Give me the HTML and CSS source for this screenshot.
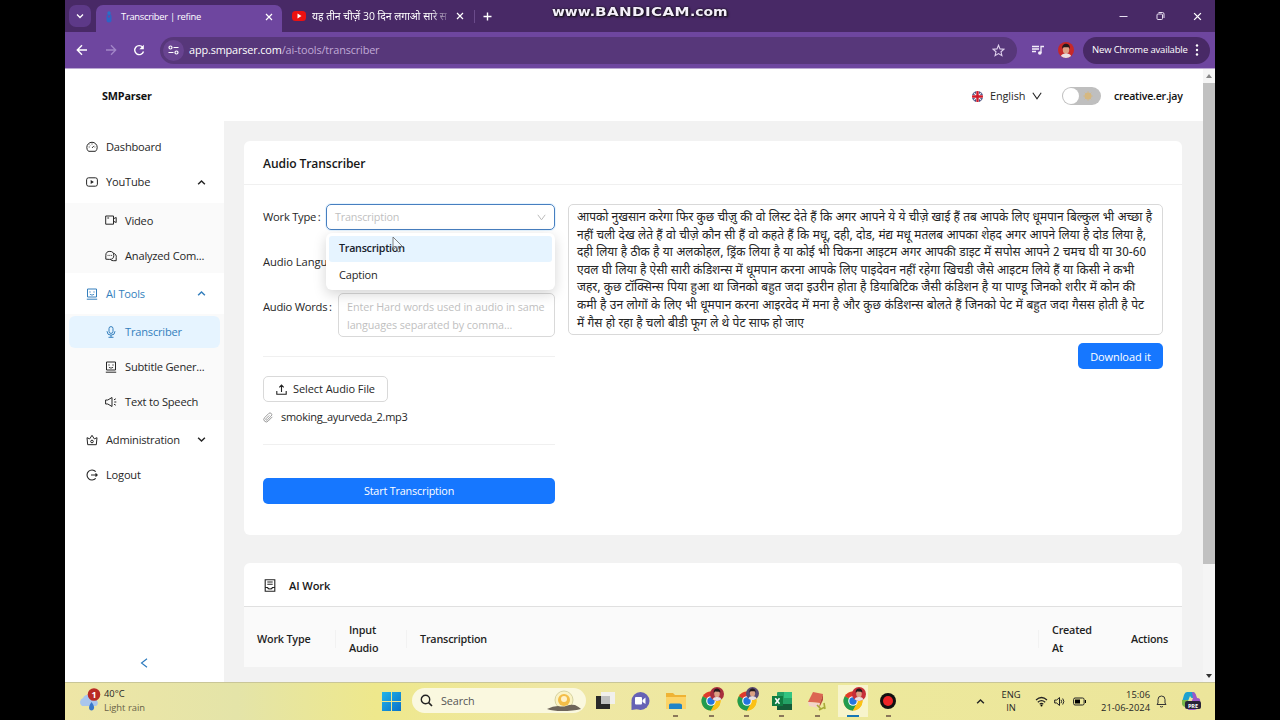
FILE: index.html
```html
<!DOCTYPE html>
<html lang="en">
<head>
<meta charset="utf-8">
<title>Transcriber | refine</title>
<link rel="stylesheet" href="styles.css">
</head>
<body>
<svg width="0" height="0" class="defs">
  <defs>
    <linearGradient id="win" x2="1" y2="1"><stop stop-color="#23b5ea"/><stop offset="1" stop-color="#0870c8"/></linearGradient>
    <symbol id="up" viewBox="0 0 8 8"><path d="M1 5.6 4 2.6 7 5.6" fill="none" stroke="currentColor" stroke-width="1.3"/></symbol>
    <symbol id="x" viewBox="0 0 8 8"><path d="M1 1 7 7M7 1 1 7" fill="none" stroke="currentColor" stroke-width="1.2"/></symbol>
    <symbol id="robot" viewBox="0 0 12 12"><g fill="none" stroke="currentColor"><path d="M1.5 1h9v8h-9zM.8 11.2h10.4"/><path d="M4 3.3v1.4M8 3.3v1.4M3.9 6.3q2.1 1.7 4.2 0" stroke-width=".9"/></g></symbol>
    <symbol id="chrome" viewBox="0 0 22 22">
      <circle cx="10" cy="12" r="9.5" fill="#fbc116"/>
      <path d="M10 12 1.8 7.2A9.5 9.5 0 0 1 18.2 7.2Z" fill="#df3a2d"/>
      <path d="M10 12 1.8 7.2A9.5 9.5 0 0 0 10 21.5Z" fill="#219b50"/>
      <path d="M10 12 14 14 10 21.5 5 19Z" fill="#219b50"/>
      <path d="M10 7.2h8.2a9.500 9.500 0 0 1-8.200 14.300l4.200-7z" fill="#fbc116"/>
      <circle cx="10" cy="12" r="4.8" fill="#fff"/><circle cx="10" cy="12" r="3.7" fill="#2475df"/>
    </symbol>
    <symbol id="face" viewBox="0 0 14 14">
      <circle cx="7" cy="7" r="7" fill="currentColor"/><ellipse cx="7" cy="6.800" rx="2.800" ry="3.600" fill="#dca184"/>
      <path d="M3.700 6C3.300 2.500 5.500 1.300 7.500 1.600s3.300 1.900 2.700 4.500L9.400 4.700 5 4.600z" fill="#251a1c"/>
      <path d="M2.500 12.300Q3.500 9.800 7 10q3.500-.2 4.500 2.300A7 7 0 0 1 2.500 12.300z" fill="#e8dfe3"/>
    </symbol>
  </defs>
</svg>
<div class="screen">
  <div class="tabs">
    <div class="tab-search"><svg width="8" height="8" viewBox="0 0 8 8"><path d="M1 2.500 4 5.500 7 2.500" fill="none" stroke="#fff" stroke-width="1.300"/></svg></div>
    <div class="tab active">
      <svg class="fav" width="8" height="12" viewBox="0 0 8 12"><rect x="1.500" y="3" width="5" height="8.500" rx="2.500" fill="#2c65c5"/><circle cx="4" cy="2" r="1.700" fill="#2872c8"/><circle cx="4" cy="5.500" r="1.200" fill="#6d46a1"/></svg>
      <span class="tab-title">Transcriber | refine</span><svg class="tab-x" width="8" height="8"><use href="#x"/></svg>
    </div>
    <div class="tab second">
      <svg width="14" height="12" viewBox="0 0 14 12"><rect y="1" width="14" height="10" rx="3.500" fill="#ed1111"/><path d="M5.500 3.500v5L9.500 6z" fill="#fff"/></svg>
      <span class="tab-title hindi-title">यह तीन चीज़ें 30 दिन लगाओ सारे स</span><svg class="tab-x" width="8" height="8"><use href="#x"/></svg>
    </div>
    <span class="tab-sep"></span>
    <svg class="plus" width="9" height="9" viewBox="0 0 9 9"><path d="M4.500.5v8M.5 4.500h8" stroke="#fff" stroke-width="1.400"/></svg>
    <div class="watermark"><span class="wm-s">www.</span><b>BANDICAM</b><span class="wm-s">.com</span></div>
    <div class="win-controls">
      <svg width="9" height="10" viewBox="0 0 9 10"><path d="M.5 5.500h8" stroke="#e8dff2"/></svg>
      <svg width="9" height="10" viewBox="0 0 9 10"><path d="M2.500 1.500h4q1.500 0 1.500 1.500v4M2 3h3.500Q6.500 3 6.500 4v3.500Q6.500 8.500 5.500 8.500H2Q1 8.500 1 7.500V4Q1 3 2 3z" fill="none" stroke="#e8dff2"/></svg>
      <svg width="9" height="9"><use href="#x"/></svg>
    </div>
  </div>
  <div class="toolbar">
    <svg width="12" height="12" viewBox="0 0 12 12"><path d="M11 6H1.500M6 1.300 1.300 6 6 10.700" fill="none" stroke="#fff" stroke-width="1.400"/></svg>
    <svg width="12" height="12" viewBox="0 0 12 12"><path d="M1 6h9.500M6 1.300 10.700 6 6 10.700" fill="none" stroke="#a286c8" stroke-width="1.300"/></svg>
    <svg width="12" height="12" viewBox="0 0 12 12"><path d="M9.700 3.300A4.500 4.500 0 1 0 10.500 7.500" fill="none" stroke="#fff" stroke-width="1.400"/><path d="M10.800.800v4.400H6.400z" fill="#fff"/></svg>
    <div class="address">
      <span class="site-info"><svg width="11" height="10" viewBox="0 0 11 10"><g fill="none" stroke="#fff" stroke-width="1.200"><circle cx="2.500" cy="2.500" r="1.500"/><path d="M5.500 2.500h5M.5 7.500h5"/><circle cx="8.500" cy="7.500" r="1.500"/></g></svg></span>
      <span class="url">app.smparser.com<i>/ai-tools/transcriber</i></span>
      <svg class="star" width="13" height="13" viewBox="0 0 13 13"><path d="M6.500 1.200 8 4.900l4 .3-3 2.600.9 3.900-3.400-2.100-3.400 2.100.9-3.900L1 5.200l4-.3z" fill="none" stroke="#e0d2ee" stroke-width="1.100"/></svg>
    </div>
    <svg class="media" width="13" height="12" viewBox="0 0 13 12"><path d="M1 2.500h7M1 5h7M1 7.500h4M10 9V2.500h3" fill="none" stroke="#f4eefa" stroke-width="1.300"/><circle cx="8.800" cy="9" r="1.800" fill="#f4eefa"/></svg>
    <svg class="profile" width="16" height="16"><use href="#face"/></svg>
    <div class="update"><span>New Chrome available</span><svg width="4" height="12" viewBox="0 0 4 12"><g fill="#fff"><circle cx="2" cy="1.500" r="1.200"/><circle cx="2" cy="6" r="1.200"/><circle cx="2" cy="10.500" r="1.200"/></g></svg></div>
  </div>
  <div class="viewport">
    <div class="app">
      <header class="header">
        <b class="brand">SMParser</b>
        <svg class="flag" width="11" height="11" viewBox="0 0 11 11"><clipPath id="fc"><circle cx="5.500" cy="5.500" r="5.500"/></clipPath><g clip-path="url(#fc)"><path fill="#28316d" d="M0 0h11v11H0z"/><path d="M0 0l11 11M11 0 0 11" stroke="#eee" stroke-width="1.200"/><path d="M5.500 0v11M0 5.500h11" stroke="#fff" stroke-width="3.300"/><path d="M5.500 0v11M0 5.500h11" stroke="#d01c2c" stroke-width="2.400"/></g></svg>
        <span class="lang">English</span>
        <svg class="lang-arrow" width="10" height="8" viewBox="0 0 10 8"><path d="M.8.800 5 6.800 9.200.8" fill="none" stroke="#222" stroke-width="1.100"/></svg>
        <span class="switch"><span class="knob"></span><svg width="10" height="10" viewBox="0 0 10 10"><circle cx="5" cy="5" r="3.500" fill="#d6b880"/><path d="M5 0v10M0 5h10M1.500 1.500l7 7M8.500 1.500l-7 7" stroke="#d6b880" opacity=".6"/></svg></span>
        <span class="user">creative.er.jay</span>
      </header>
      <div class="content">
        <nav class="sider">
          <div class="item"><svg width="12" height="12" viewBox="0 0 12 12"><g fill="none" stroke="currentColor"><path d="M2.500 10.300a5.200 5.200 0 1 1 7 0z"/><path d="M6 7 8 4.800M2.700 6h1M6 2.500v1M9.300 6h-.8M3.500 3.700l.6.6" stroke-width=".9"/></g></svg><span>Dashboard</span></div>
          <div class="item"><svg width="12" height="12" viewBox="0 0 12 12"><rect x=".6" y="1.800" width="10.800" height="8.400" rx="2" fill="none" stroke="currentColor"/><path d="M4.700 4v4L7.900 6z" fill="currentColor"/></svg><span>YouTube</span><svg class="arrow" width="9" height="9"><use href="#up"/></svg></div>
          <div class="sub">
            <div class="item"><svg width="12" height="12" viewBox="0 0 12 12"><path d="M.7 2h7.800v8.200H.7zM2.300 4h1.800M8.500 4.700l2.700-1.200v5L8.500 7.300" fill="none" stroke="currentColor"/></svg><span>Video</span></div>
            <div class="item"><svg width="12" height="12" viewBox="0 0 12 12"><path d="M.8 9.200V5.400a4 4 0 1 1 3.900 4zM8.300 3.200a3.600 3.600 0 0 1 2.900 4.500v3H8.300a3.500 3.500 0 0 1-3-1.300" fill="none" stroke="currentColor"/><path d="M2.600 5.400h.9M4.400 5.400h.9M6.200 5.400h.9" stroke="currentColor"/></svg><span>Analyzed Com...</span></div>
          </div>
          <div class="item blue"><svg width="12" height="12"><use href="#robot"/></svg><span>AI Tools</span><svg class="arrow" width="9" height="9"><use href="#up"/></svg></div>
          <div class="sub tools">
            <div class="item selected"><svg width="12" height="12" viewBox="0 0 12 12"><g fill="none" stroke="currentColor"><rect x="4" y=".6" width="4" height="6.800" rx="2"/><path d="M2 5.200a4 4 0 0 0 8 0M6 9.200v2M3.500 11.300h5"/></g></svg><span>Transcriber</span></div>
            <div class="item"><svg width="12" height="12"><use href="#robot"/></svg><span>Subtitle Gener...</span></div>
            <div class="item"><svg width="12" height="12" viewBox="0 0 12 12"><path d="M.6 4h2.200L7 1.500v9L2.800 8H.6zM9 3.800l1.800-1M9.300 6h2M9 8.200l1.800 1" fill="none" stroke="currentColor"/></svg><span>Text to Speech</span></div>
          </div>
          <div class="item"><svg width="12" height="12" viewBox="0 0 12 12"><g fill="none" stroke="currentColor"><path d="M1.700 10.700 1 3.700l2.700 1.200L6 1.300l2.300 3.600L11 3.700l-.7 7z"/><circle cx="6" cy="7.500" r="1.300"/></g></svg><span>Administration</span><svg class="arrow down" width="9" height="9"><use href="#up"/></svg></div>
          <div class="item"><svg width="12" height="12" viewBox="0 0 12 12"><path d="M9.700 2.600a5 5 0 1 0 0 6.800M5 6h6M9.500 4.500 11.200 6 9.500 7.500" fill="none" stroke="currentColor" stroke-width="1.100"/></svg><span>Logout</span></div>
          <div class="collapse"><svg width="8" height="10" viewBox="0 0 8 10"><path d="M7 .8 1.500 5 7 9.200" fill="none" stroke="#2878bd" stroke-width="1.100"/></svg></div>
        </nav>
        <main class="main">
          <section class="card transcriber">
            <h2 class="card-title">Audio Transcriber</h2>
            <div class="card-body">
              <div class="form">
                <div class="row"><label class="l1">Work Type&thinsp;:</label>
                  <div class="select"><span>Transcription</span><svg width="9" height="7" viewBox="0 0 9 7"><path d="M.8.800 4.500 5.800 8.200.8" fill="none" stroke="#bbb"/></svg>
                    <div class="dropdown"><div class="option chosen">Transcription</div><div class="option">Caption</div></div>
                  </div>
                </div>
                <div class="row row2"><label>Audio Langu</label></div>
                <div class="row row3"><label class="l3">Audio Words&thinsp;:</label><div class="words"><span>Enter Hard words used in audio in same</span><span>languages separated by comma...</span></div></div>
                <hr class="rule">
                <div class="file-button"><svg width="11" height="11" viewBox="0 0 11 11"><path d="M.8 7v3.200h9.400V7M5.500 8V1.200M3.300 3.300l2.200-2.200 2.200 2.200" fill="none" stroke="#222" stroke-width="1.100"/></svg><span>Select Audio File</span></div>
                <div class="file"><svg width="11" height="11" viewBox="0 0 12 12"><path d="M10.200 5.300 5.500 10a2.600 2.600 0 0 1-3.800-3.800L6.300 1.600a1.900 1.900 0 0 1 2.700 2.700L4.700 8.600a.9.900 0 0 1-1.400-1.300l3.600-3.600" fill="none" stroke="#888" stroke-width=".9"/></svg><span>smoking_ayurveda_2.mp3</span></div>
                <hr class="rule">
                <div class="button start"><span>Start Transcription</span></div>
              </div>
              <div class="result">
                <div class="output" lang="hi">
                  <p class="o1">आपको नुखसान करेगा फिर कुछ चीज़ु की वो लिस्ट देते हैं कि अगर आपने ये ये चीज़े खाई हैं तब आपके लिए धूमपान बिल्कुल भी अच्छा है</p>
                  <p class="o2">नहीं चली देख लेते हैं वो चीज़े कौन सी हैं वो कहते हैं कि मधू, दही, दोड, मंद्य मधू मतलब आपका शेहद अगर आपने लिया है दोड लिया है,</p>
                  <p class="o2">दही लिया है ठीक है या अलकोहल, ड्रिंक लिया है या कोई भी चिकना आइटम अगर आपकी डाइट में सपोस आपने 2 चमच घी या 30-60</p>
                  <p class="o4">एवल घी लिया है ऐसी सारी कंडिशन्स में धूमपान करना आपके लिए पाइदेवन नहीं रहेगा खिचडी जैसे आइटम लिये हैं या किसी ने कभी</p>
                  <p class="o5">जहर, कुछ टॉक्सिन्स पिया हुआ था जिनको बहुत जदा इउरीन होता है डियाबिटिक जैसी कंडिशन है या पाण्डू जिनको शरीर में कोन की</p>
                  <p class="o6">कमी है उन लोगों के लिए भी धूमपान करना आइरवेद में मना है और कुछ कंडिशन्स बोलते हैं जिनको पेट में बहुत जदा गैसस होती है पेट</p>
                  <p class="o7">में गैस हो रहा है चलो बीडी फूग ले थे पेट साफ हो जाए</p>
                </div>
                <div class="button download"><span>Download it</span></div>
              </div>
            </div>
          </section>
          <section class="card work">
            <h2 class="card-title work-title"><svg width="12" height="13" viewBox="0 0 12 13"><path d="M1.200.700h9.600v11.600H1.200zM3.300 3h5.400M3.300 5.200h5.400M1.200 8.500h2.300q.4 1.500 2.500 1.500t2.500-1.500h2.300" fill="none" stroke="#222" stroke-width="1.100"/></svg>AI Work</h2>
            <div class="table-head"><span class="c1">Work Type</span><span class="c2">Input<br>Audio</span><span class="c3">Transcription</span><span class="c4">Created<br>At</span><span class="c5">Actions</span></div>
          </section>
        </main>
      </div>
    </div>
    <div class="scrollbar"><i class="sb-up"></i><span class="thumb"></span><i class="sb-down"></i></div>
  </div>
  <div class="taskbar">
    <div class="weather">
      <svg width="22" height="26" viewBox="0 0 22 26"><path d="M3 18a4.500 4.500 0 0 1 1-8 6 6 0 0 1 11 1 3.800 3.800 0 0 1 2 7z" fill="#a9c6ee"/><path d="M12.500 14q4 5 2 7.500-2 1.800-4 0-1.700-2.500 2-7.500z" fill="#3877c9"/><circle cx="15" cy="6.500" r="6.300" fill="#b92b24"/><text x="15" y="9.800" text-anchor="middle" class="badge">1</text></svg>
      <div class="weather-text"><span>40°C</span><span class="dim">Light rain</span></div>
    </div>
    <svg class="winlogo" width="19" height="19" viewBox="0 0 19 19"><path d="M0 0h9v9H0zM10 0h9v9h-9zM0 10h9v9H0zM10 10h9v9h-9z" fill="url(#win)"/></svg>
    <div class="search"><svg width="13" height="13" viewBox="0 0 13 13"><circle cx="5.500" cy="5.500" r="4.200" fill="none" stroke="#222" stroke-width="1.400"/><path d="m8.600 8.600 3.400 3.400" stroke="#222" stroke-width="1.600"/></svg><span>Search</span>
      <svg class="art" width="36" height="22" viewBox="0 0 36 22"><circle cx="18" cy="10" r="9" fill="#faf3c4" stroke="#d6d3a2"/><circle cx="18" cy="10" r="6" fill="#f3bd48"/><circle cx="18" cy="9" r="3" fill="#fff1c7"/><path d="M1 19q6-3 11-3 5 1 8 0 5-2 9-1 4 2 6 4-8 2-19 2-9 0-15-2z" fill="#6e655b"/></svg></div>
    <div class="apps">
      <svg width="20" height="20" viewBox="0 0 20 20"><path d="M1 5h14v13H1z" fill="#292929"/><path d="M6 1h14v12H6z" fill="#f1f0ec"/><path d="M6 5h9v8H6z" fill="#bfc0c0"/></svg>
      <svg width="20" height="20" viewBox="0 0 20 20"><circle cx="10.500" cy="10" r="9" fill="#6762b5"/><path d="M1.500 11v8l7-1z" fill="#6762b5"/><rect x="5" y="6" width="7" height="7.500" rx="1" fill="#fff"/><path d="m12.500 9 3-2.500v6.500l-3-2z" fill="#fff"/></svg>
      <svg class="run" width="20" height="20" viewBox="0 0 20 20"><path d="M0 2h7l2 2h11v14H0z" fill="#efb334"/><path d="M0 6h20v12H0z" fill="#fcd467"/><path d="M3 18v-4q0-1.500 1.500-1.500h9Q16 12.500 16 14v4z" fill="#2185c7"/></svg>
      <span class="chr run"><svg width="22" height="22"><use href="#chrome"/></svg><svg class="av a1" width="14" height="14"><use href="#face"/></svg></span>
      <span class="chr run"><svg width="22" height="22"><use href="#chrome"/></svg><svg class="av a2" width="13" height="13"><use href="#face"/></svg></span>
      <svg class="run" width="20" height="20" viewBox="0 0 20 20"><rect x="5" y="1" width="15" height="18" rx="1" fill="#24a266"/><path d="M12 1h8v6h-8z" fill="#33c481"/><path d="M5 13h15v6H5z" fill="#155c39"/><path d="M0 5h11v10H0z" fill="#107c41"/><path d="m3.300 7.300 4.200 5.400M7.500 7.300l-4.200 5.400" stroke="#fff" stroke-width="1.500"/></svg>
      <svg class="run" width="20" height="20" viewBox="0 0 20 20"><path d="m6 1 10 2-3 9-12-1z" fill="#dc6652"/><path d="m1 11 12 1-1 5-10-2z" fill="#f3d4ca"/><path d="m16 3-3 9-1 5 4-8z" fill="#b84a3d"/><path d="m10 14 4 4M17 12l1 6M12 19l6-3" stroke="#a8ab37" stroke-width="1.600"/></svg>
      <span class="chr current"><svg width="22" height="22"><use href="#chrome"/></svg><svg class="av a3" width="14" height="14"><use href="#face"/></svg></span>
      <svg class="run" width="20" height="20" viewBox="0 0 20 20"><circle cx="10" cy="10" r="8" fill="#111"/><circle cx="10" cy="10" r="5" fill="#ed2527"/></svg>
    </div>
    <div class="tray">
      <svg class="tray-up" width="9" height="9"><use href="#up"/></svg>
      <div class="ime">ENG<br>IN</div>
      <svg class="wifi" width="13" height="11" viewBox="0 0 13 11"><g fill="none" stroke="#222" stroke-width="1.200"><path d="M1 4q5.500-5 11 0M2.800 6.200q3.700-3.300 7.400 0M4.700 8.200q1.800-1.500 3.600 0"/></g><circle cx="6.500" cy="9.500" r="1"/></svg>
      <svg class="sound" width="12" height="11" viewBox="0 0 12 11"><path d="M.7 4h2L5.500 1.500v8L2.700 7h-2zM7 3.800q1.300 1.700 0 3.400M8.700 2.500q2.300 3 0 6" fill="none" stroke="#222"/></svg>
      <svg class="battery" width="13" height="11" viewBox="0 0 13 11"><rect x=".6" y="2" width="10.500" height="7" rx="1.500" fill="none" stroke="#222"/><path d="M2 3.500h5v4H2zM12 4h1v3h-1z"/></svg>
      <div class="clock">15:06<br>21-06-2024</div>
      <svg class="bell" width="11" height="13" viewBox="0 0 11 13"><path d="M1 9.500 2 8V4.500a3.500 3.500 0 0 1 7 0V8l1 1.500zM4 11.500q1.500 1 3 0" fill="none" stroke="#333"/></svg>
      <svg class="copilot" width="20" height="20" viewBox="0 0 20 20"><path d="M6 1h6q2 0 2.500 3l1 3h-5L9 5 5 15q-4 0-4-4L3 4q1-3 3-3z" fill="#1da1cf"/><path d="M11 1q3 0 4 3l1 3q4 0 3 4l-2 5q-1 3-4 3H7l5-12z" fill="#9b58c9"/><path d="M1 9h6l-2 7q-4 0-4-4z" fill="#7bb84b"/><rect x="4" y="10" width="16" height="8" rx="2" fill="#272338"/><text x="12" y="16.500" text-anchor="middle" class="pre">PRE</text></svg>
    </div>
  </div>
  <svg class="cursor" width="12" height="18" viewBox="0 0 12 18"><path d="M1 1v13l3-2.800 2 4.800 2-1-2-4.500h4.500z" fill="#fff" fill-opacity=".4" stroke="#666" stroke-width=".8"/></svg>
</div>
</body>
</html>
```
FILE: styles.css
```css
* { box-sizing: border-box; }
body { margin: 0; width: 1280px; height: 720px; overflow: hidden; background: #000; font: 11.2px/17.6px "Open Sans", "Noto Sans", sans-serif; color: #262626; }
svg { display: block; flex: none; }
span, label, b { white-space: nowrap; }
h2, p { margin: 0; }
.defs { position: absolute; }
.screen { position: relative; width: 1150px; height: 720px; margin-left: 65px; display: flex; flex-direction: column; overflow: hidden; }

.tabs { height: 32px; flex: none; display: flex; align-items: center; background: #482966; color: #fff; position: relative; font-size: 9.6px; }
.tab-search { width: 22px; height: 22px; margin: 0 5px 0 4px; border-radius: 7px; background: #5d3988; display: flex; align-items: center; justify-content: center; }
.tab { display: flex; align-items: center; height: 27px; }
.active { width: 186px; height: 27px; align-self: flex-end; background: #6e469f; border-radius: 7px 7px 0 0; padding: 0 9px 4px 9px; }
.fav { margin-right: 8px; }
.tab-title { letter-spacing: -.2px; }
.active .tab-title { font-size: 9.4px; letter-spacing: -.28px; }
.tab-x { margin-left: auto; }
.second { width: 182px; padding: 0 0 0 10px; gap: 6px; }
.hindi-title { width: 137px; padding-top: 1px; letter-spacing: 0; -webkit-mask-image: linear-gradient(90deg, #000 86%, transparent 103%); mask-image: linear-gradient(90deg, #000 86%, transparent 103%); font-size: 10.4px; }
.tab-sep { width: 1px; height: 13px; background: #6b4b8b; margin: 0 8px 0 10px; }
.watermark { position: absolute; left: 487px; top: 3px; display: flex; align-items: baseline; color: #f4effa; font-family: "DejaVu Sans", sans-serif; font-size: 13px; text-shadow: 0 0 2px #111, 1px 1px 2px #111; transform: scaleX(1.16); transform-origin: left; }
.watermark b { letter-spacing: .35px; }
.wm-s { font-size: 12px; font-weight: bold; }
.win-controls { margin-left: auto; display: flex; gap: 28px; align-items: center; padding-right: 13px; }

.toolbar { height: 37px; flex: none; display: flex; align-items: center; padding: 0 4px 0 11px; background: #6e469f; border-bottom: 1px solid #bba8d2; color: #fff; }
.toolbar > svg { margin-right: 16.7px; }
.address { width: 857px; height: 27px; margin-left: -2px; border-radius: 14px; background: #57377a; display: flex; align-items: center; padding: 0 12px 0 3px; }
.site-info { width: 21px; height: 21px; border-radius: 50%; background: #684390; display: flex; align-items: center; justify-content: center; }
.url { margin-left: 5px; font-size: 10.9px; letter-spacing: -.16px; }
.url i { font-style: normal; color: #c0aad6; }
.star { margin-left: auto; }
.toolbar > .media { margin: 0 14px 0 14px; }
.toolbar > .profile { margin: 0 9px 0 0; color: #c62828; }
.update { width: 127px; height: 27px; flex: none; border-radius: 14px; background: #482966; display: flex; align-items: center; padding: 0 11px 0 9px; justify-content: space-between; font-size: 9.5px; letter-spacing: -.18px; }

.viewport { height: 613px; flex: none; display: flex; background: #fff; }
.app { width: 1138px; display: flex; flex-direction: column; }
.header { height: 52px; flex: none; display: flex; align-items: center; padding: 2px 20px 0 37px; }
.brand { color: #111; font-size: 10.8px; letter-spacing: -.15px; }
.flag { margin-left: auto; }
.lang { width: 36px; margin-left: 7px; font-size: 10.9px; letter-spacing: -.1px; }
.lang-arrow { margin-left: 6px; }
.switch { width: 39px; height: 18px; margin-left: 20px; border-radius: 9px; background: #bfbfbf; display: flex; align-items: center; justify-content: space-between; padding: 0 8px 0 1px; }
.knob { width: 16px; height: 16px; border-radius: 50%; background: #fff; }
.user { width: 69px; margin-left: 13px; padding-top: 1px; color: #111; font-weight: 600; font-size: 10.6px; letter-spacing: -.24px; }
.content { flex: 1; display: flex; min-height: 0; }

.sider { width: 159px; display: flex; flex-direction: column; padding-top: 8.5px; }
.item { height: 32px; margin: 1.6px 4px; padding: 0 14px 0 17px; display: flex; align-items: center; gap: 8px; font-size: 11.1px; letter-spacing: -.2px; flex: none; }
.sub { background: #fafafa; margin: 3px 0; display: flex; flex-direction: column; flex: none; }
.sub .item { padding-left: 36px; }
.tools { margin: 2.8px 0 2.4px; }
.arrow { margin-left: auto; }
.down { transform: rotate(180deg); }
.blue, .selected { color: #347fbd; }
.selected { background: #e6f4ff; border-radius: 6px; }
.collapse { margin: auto 0 14px 75px; }

.main { flex: 1; background: #f2f2f2; padding: 20px 21px 0 20px; overflow: hidden; }
.card { background: #fff; border-radius: 6px; }
.transcriber { height: 394px; margin-bottom: 28px; }
.card-title { height: 44px; display: flex; align-items: center; padding: 2px 19px 0; border-bottom: 1px solid #f0f0f0; font-size: 12.1px; letter-spacing: -.1px; font-weight: 600; color: #171717; }
.card-body { display: flex; gap: 13px; padding: 19px 19px 0; }
.form { width: 292px; flex: none; letter-spacing: -.08px; }
.row { display: flex; align-items: center; height: 26px; }
.l1 { width: 63px; flex: none; letter-spacing: -.25px; }
.select { position: relative; flex: 1; height: 26px; border: 1.5px solid #477fc0; border-radius: 5px; box-shadow: 0 0 0 1px #e6f4ff; padding: 0 8px; display: flex; align-items: center; justify-content: space-between; color: #bfbfbf; font-size: 10.8px; letter-spacing: -.2px; }
.dropdown { position: absolute; z-index: 2; left: -1px; top: 28px; width: 229px; height: 57px; background: #fff; border-radius: 6px; padding: 3px; box-shadow: 0 4px 13px rgba(0,0,0,.17); color: #262626; font-size: 11px; }
.option { height: 25.6px; padding: 0 10px; display: flex; align-items: center; border-radius: 3px; }
.chosen { background: #e6f4ff; font-weight: 600; color: #17222c; font-size: 10.7px; letter-spacing: -.25px; }
.row2 { margin-top: 19px; }
.row3 { margin-top: 18px; height: 44px; align-items: flex-start; }
.l3 { width: 75px; flex: none; padding-top: 5px; letter-spacing: -.25px; }
.words { flex: 1; min-width: 0; height: 44px; border: 1px solid #d9d9d9; border-radius: 5px; padding: 4px 8px; display: flex; flex-direction: column; color: #bfbfbf; font-size: 10.8px; letter-spacing: -.1px; }
.rule { height: 1px; border: 0; background: #f0f0f0; margin: 19px 0; }
.file-button { width: 125px; height: 26px; border: 1px solid #d9d9d9; border-radius: 5px; padding: 0 12px; display: flex; align-items: center; gap: 6px; font-size: 11px; }
.file { display: flex; align-items: center; gap: 7px; margin-top: 6px; height: 18px; font-size: 11px; letter-spacing: -.28px; }
.rule + .start { margin-top: 32.5px; }
.file + .rule { margin-top: 18px; }
.button { height: 26px; border-radius: 5px; background: #1677ff; color: #fff; display: flex; align-items: center; justify-content: center; }
.start { font-size: 10.8px; letter-spacing: -.18px; }
.result { flex: 1; }
.output { height: 131px; border: 1px solid #d9d9d9; border-radius: 5px; padding: 5px 0 0 8px; font: 12px/17.6px "Noto Sans Devanagari", "Open Sans", "Noto Sans", sans-serif; }
.output p { height: 17.6px; white-space: nowrap; text-align-last: justify; }
.o1 { width: 575px; font-size: 11.95px; }
.o2 { width: 569px; font-size: 11.95px; }
.o4 { width: 557px; }
.o5 { width: 558px; }
.o6 { width: 567px; }
.o7 { width: 227px; }
.download { width: 85px; margin: 8px 0 0 auto; padding-top: 1px; font-size: 11px; letter-spacing: -.1px; }
.work-title { height: 44px; gap: 13px; font-size: 11.1px; border-color: #e0e0e0; padding-left: 20px; }
.table-head { height: 60px; padding: 4px 13px 0; background: #fafafa; display: flex; align-items: center; font-weight: 600; font-size: 10.8px; letter-spacing: -.2px; color: #1f1f1f; }
.c1, .c2, .c3 { position: relative; }
.c1::after, .c2::after, .c3::after { content: ""; position: absolute; right: 13px; top: 50%; width: 1px; height: 18px; margin-top: -9px; background: #f2f2f2; }
.c1 { width: 92px; }
.c2 { width: 71px; }
.c3 { flex: 1; }
.c4 { width: 79px; }
.c5 { width: 38px; }

.scrollbar { width: 12px; background: #f5f5f5; display: flex; flex-direction: column; align-items: center; padding: 5px 0 4px; }
.sb-up, .sb-down { border: 3px solid transparent; flex: none; }
.sb-up { border-bottom: 4px solid #888; border-top: 0; }
.sb-down { border-top: 4px solid #333; border-bottom: 0; margin-top: auto; }
.thumb { width: 12px; height: 481px; margin-top: 5px; background: #c1c1c1; }

.taskbar { height: 38px; flex: none; position: relative; display: flex; align-items: center; border-top: 1px solid #c9c698; background: linear-gradient(90deg, #eee6a6, #e4e4a8 15%, #eee88c 27%, #efe7a5 43%, #ede99c 65%, #ece59b); font-size: 9.4px; line-height: 13.5px; color: #262626; }
.weather { width: 317px; display: flex; gap: 3px; padding-left: 14px; padding-bottom: 2px; align-items: center; }
.badge { font: bold 9px "Open Sans", sans-serif; fill: #fff; }
.weather-text { display: flex; flex-direction: column; }
.dim { color: #686347; }
.search { width: 174px; height: 25px; margin-left: 11px; margin-bottom: 2px; border-radius: 13px; background: #faf8df; display: flex; align-items: center; gap: 8px; padding: 0 4px 0 8px; font-size: 10.8px; letter-spacing: -.1px; color: #555; }
.art { margin-left: auto; }
.apps { display: flex; align-items: center; margin-left: 9px; margin-bottom: 2px; gap: 15.4px; }
.apps > * { flex: none; width: 20px; }
.run, .current { overflow: visible; }
.run { background: radial-gradient(#8b7859, #8b7859) center bottom / 5px 2px no-repeat; height: 32px; padding: 6px 0; }
.chr { position: relative; display: block; height: 32px; padding: 4px 0; }
.current { background: linear-gradient(#1677b5, #1677b5) center bottom / 12px 2px no-repeat, #f7f4cc; box-shadow: -5px 0 #f7f4cc, 5px 0 #f7f4cc; }
.av { position: absolute; top: 2px; left: 9px; }
.a1 { color: #a82f3d; }
.a2 { color: #5b4b72; }
.a3 { color: #c72e38; }
.tray { margin-left: auto; margin-bottom: 1px; display: flex; align-items: center; padding-right: 14px; text-align: center; }
.tray-up { margin-right: 16px; }
.ime { width: 20px; margin-right: 14px; }
.wifi { margin-right: 6px; }
.sound { margin-right: 7px; }
.battery { margin-right: 12px; }
.clock { width: 52px; text-align: right; margin-right: 6px; white-space: nowrap; }
.bell { margin-right: 14px; }
.pre { font: bold 5.5px "Open Sans", sans-serif; fill: #fff; }
.cursor { position: absolute; left: 327px; top: 236px; z-index: 5; }
```
